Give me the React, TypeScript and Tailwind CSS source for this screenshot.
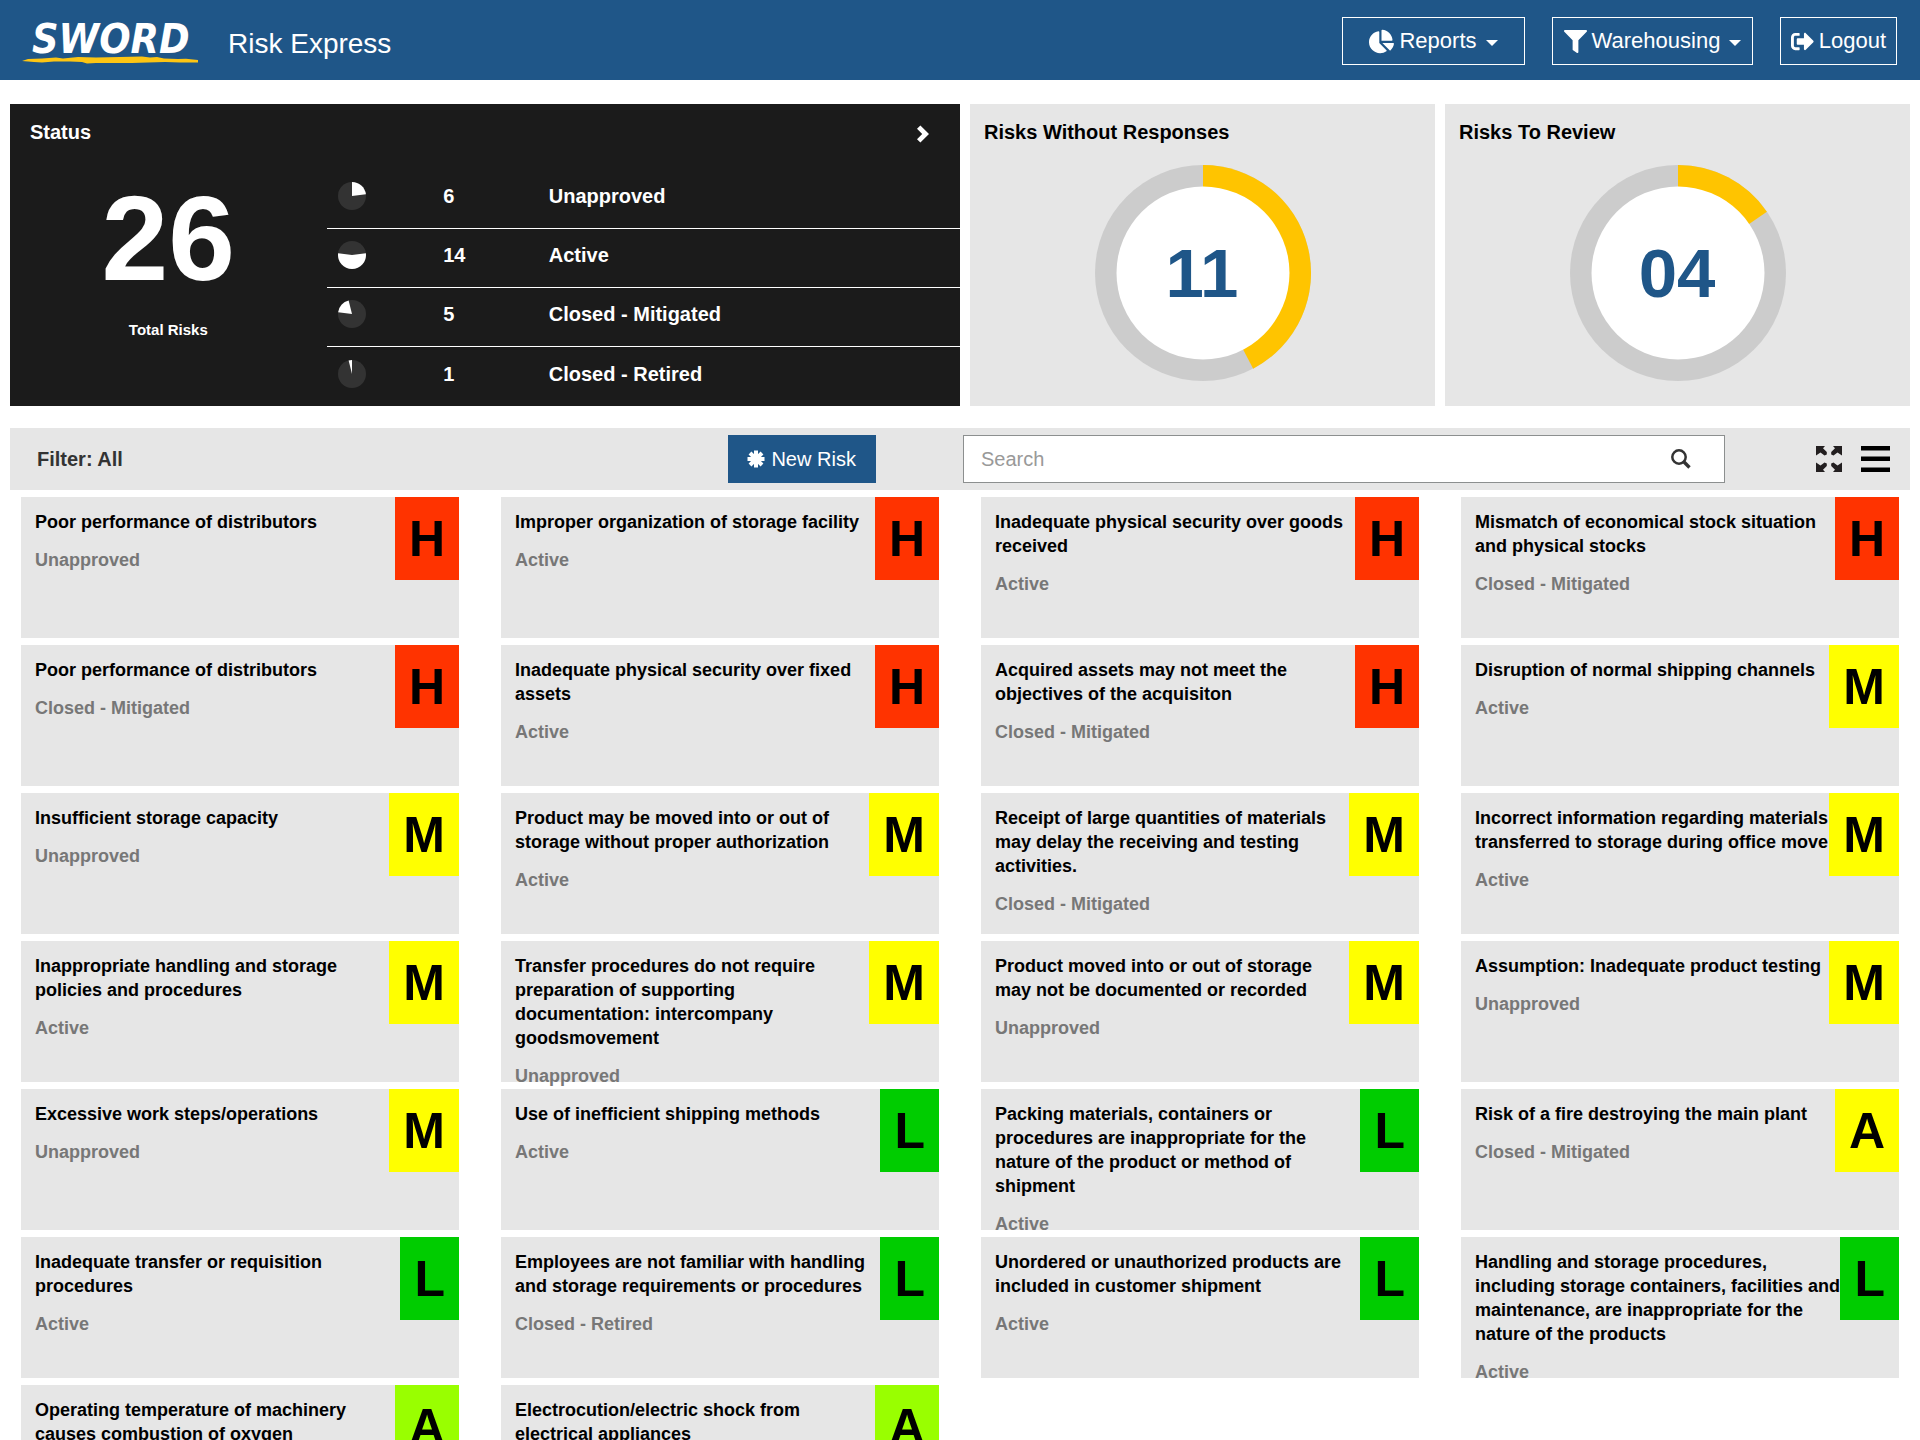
import React from "react";
import { FaChartPie, FaFilter, FaSignOutAlt } from "react-icons/fa";

type Rating = "H" | "M" | "L" | "A" | "a";

const badgeColor: Record<Rating, string> = {
  H: "bg-[#ff3300]",
  M: "bg-[#ffff00]",
  A: "bg-[#ffff00]",
  L: "bg-[#00cc00]",
  a: "bg-[#99ff00]",
};

const risks: [string, string, Rating][] = [
  ["Poor performance of distributors", "Unapproved", "H"],
  ["Improper organization of storage facility", "Active", "H"],
  ["Inadequate physical security over goods received", "Active", "H"],
  ["Mismatch of economical stock situation and physical stocks", "Closed - Mitigated", "H"],
  ["Poor performance of distributors", "Closed - Mitigated", "H"],
  ["Inadequate physical security over fixed assets", "Active", "H"],
  ["Acquired assets may not meet the objectives of the acquisiton", "Closed - Mitigated", "H"],
  ["Disruption of normal shipping channels", "Active", "M"],
  ["Insufficient storage capacity", "Unapproved", "M"],
  ["Product may be moved into or out of storage without proper authorization", "Active", "M"],
  ["Receipt of large quantities of materials may delay the receiving and testing activities.", "Closed - Mitigated", "M"],
  ["Incorrect information regarding materials transferred to storage during office move", "Active", "M"],
  ["Inappropriate handling and storage policies and procedures", "Active", "M"],
  ["Transfer procedures do not require preparation of supporting documentation: intercompany goodsmovement", "Unapproved", "M"],
  ["Product moved into or out of storage may not be documented or recorded", "Unapproved", "M"],
  ["Assumption: Inadequate product testing", "Unapproved", "M"],
  ["Excessive work steps/operations", "Unapproved", "M"],
  ["Use of inefficient shipping methods", "Active", "L"],
  ["Packing materials, containers or procedures are inappropriate for the nature of the product or method of shipment", "Active", "L"],
  ["Risk of a fire destroying the main plant", "Closed - Mitigated", "A"],
  ["Inadequate transfer or requisition procedures", "Active", "L"],
  ["Employees are not familiar with handling and storage requirements or procedures", "Closed - Retired", "L"],
  ["Unordered or unauthorized products are included in customer shipment", "Active", "L"],
  ["Handling and storage procedures, including storage containers, facilities and maintenance, are inappropriate for the nature of the products", "Active", "L"],
  ["Operating temperature of machinery causes combustion of oxygen", "Active", "a"],
  ["Electrocution/electric shock from electrical appliances", "Active", "a"],
];

const TOTAL = 26;

const statuses: { count: number; label: string; start: number }[] = [
  { count: 6, label: "Unapproved", start: 0 },
  { count: 14, label: "Active", start: 6 },
  { count: 5, label: "Closed - Mitigated", start: 20 },
  { count: 1, label: "Closed - Retired", start: 25 },
];

function wedge(c: number, r: number, from: number, to: number) {
  const point = (f: number) => {
    const a = f * 2 * Math.PI;
    return `${(c + r * Math.sin(a)).toFixed(3)} ${(c - r * Math.cos(a)).toFixed(3)}`;
  };
  return `M${c} ${c}L${point(from)}A${r} ${r} 0 ${to - from > 0.5 ? 1 : 0} 1 ${point(to)}Z`;
}

function MiniPie({ start, count }: { start: number; count: number }) {
  return (
    <svg viewBox="0 0 28 28" className="size-7" aria-hidden="true">
      <circle cx="14" cy="14" r="14" fill="#333333" />
      <path d={wedge(14, 14, start / TOTAL, (start + count) / TOTAL)} fill="#ffffff" />
    </svg>
  );
}

function Logo() {
  return (
    <svg viewBox="0 0 180 52" className="h-[52px] w-[180px] overflow-visible" role="img" aria-label="Sword">
      <text
        x="12"
        y="39"
        fill="#ffffff"
        fontFamily="'DejaVu Sans Condensed', 'DejaVu Sans', sans-serif"
        fontWeight="700"
        fontStyle="italic"
        fontSize="41"
      >
        SWORD
      </text>
      <path
        d="M2 47L8 45L22 44.500L36 43.500L43 44.500L58 43L76 43.500L100 43L122 42.500L130 43.500L137 43L144 44.500L158 45L166 44.700L178 46V48.500L160 48.500L145 48L128 48.500L112 49L90 49L76 49L67 49.500L62 48L50 47.500L34 47.500L22 48.500L14 48Z"
        fill="#fdc513"
      />
    </svg>
  );
}

function Caret() {
  return <span className="mt-1 border-x-6 border-t-6 border-x-transparent border-t-white" aria-hidden="true" />;
}

function DonutCard({ title, value, count }: { title: string; value: string; count: number }) {
  return (
    <section className="flex-1 bg-[#e6e6e6] px-[14px] pt-4">
      <h2 className="text-xl leading-6 font-bold text-black">{title}</h2>
      <div className="mt-[21px] flex justify-center">
        <svg viewBox="0 0 216 216" className="size-[216px]" role="img" aria-label={`${title}: ${value}`}>
          <circle cx="108" cy="108" r="108" fill="#cccccc" />
          <path d={wedge(108, 108, 0, count / TOTAL)} fill="#ffc400" />
          <circle cx="108" cy="108" r="86.500" fill="#ffffff" />
          <text
            x="107"
            y="132"
            textAnchor="middle"
            fill="#1f5688"
            fontFamily="'Liberation Sans', Arial, sans-serif"
            fontWeight="700"
            fontSize="69"
          >
            {value}
          </text>
        </svg>
      </div>
    </section>
  );
}

function RiskCard({ title, status, rating }: { title: string; status: string; rating: Rating }) {
  return (
    <article className="flex h-[141px] items-start bg-[#e6e6e6] pl-[14px]">
      <div className="-mr-px min-w-0 flex-1 pt-[13px] text-lg leading-6 font-bold">
        <h3 className="text-black">{title}</h3>
        <p className="mt-[14px] text-[#777777]">{status}</p>
      </div>
      <div className={`flex h-[83px] shrink-0 items-center px-[14px] text-[50px] leading-none font-bold text-black ${badgeColor[rating]}`}>
        {rating.toUpperCase()}
      </div>
    </article>
  );
}

export default function App() {
  const navButton = "flex h-12 items-center justify-center border border-white text-[22px] leading-none text-white";
  return (
    <div className="min-h-screen bg-white font-['Liberation_Sans',Arial,sans-serif] text-[#333333]">
      <header className="flex h-20 items-center bg-[#1f5688] pr-[23px] pl-5 text-white">
        <Logo />
        <h1 className="mt-2 ml-7 text-[28px] leading-8">Risk Express</h1>
        <nav className="mt-[2px] ml-auto flex gap-[27px]">
          <button type="button" className={`${navButton} w-[183px] gap-[5px]`}>
            <FaChartPie className="size-[25px]" aria-hidden="true" />
            <span className="mr-1">Reports</span>
            <Caret />
          </button>
          <button type="button" className={`${navButton} w-[201px] gap-[5px]`}>
            <FaFilter className="size-[23px]" aria-hidden="true" />
            <span className="mr-1">Warehousing</span>
            <Caret />
          </button>
          <button type="button" className={`${navButton} w-[117px] gap-[5px]`}>
            <FaSignOutAlt className="size-[23px]" aria-hidden="true" />
            Logout
          </button>
        </nav>
      </header>

      <main>
        <div className="mt-6 flex h-[302px] px-[10px]">
          <section className="flex w-1/2 bg-[#1b1b1b] text-white">
            <div className="w-1/3 pt-4 text-center font-bold">
              <h2 className="pl-5 text-left text-xl leading-6">Status</h2>
              <p className="mt-[34px] text-[120px] leading-[120px]">26</p>
              <p className="mt-5 text-[15px] leading-6">Total Risks</p>
            </div>
            <div className="flex w-2/3 flex-col">
              <div className="flex h-[66px] items-start justify-end pt-[21px] pr-[30px]">
                <button type="button" aria-label="Show status details">
                  <svg viewBox="0 0 14 18" className="h-[18px] w-[14px]" aria-hidden="true">
                    <path d="M1 3.800L4.400 0.400L13 9L4.400 17.600L1 14.200L6.200 9Z" fill="#ffffff" />
                  </svg>
                </button>
              </div>
              <ul className="text-xl leading-6 font-bold">
                {statuses.map((s) => (
                  <li key={s.label} className="grid h-[59px] grid-cols-6 items-center border-b border-white pb-[6px] last:border-b-0">
                    <span className="pl-[11px]">
                      <MiniPie start={s.start} count={s.count} />
                    </span>
                    <span className="pl-[11px]">{s.count}</span>
                    <span className="col-span-4 pl-[11px]">{s.label}</span>
                  </li>
                ))}
              </ul>
            </div>
          </section>
          <div className="flex w-1/2 gap-[10px] pl-[10px]">
            <DonutCard title="Risks Without Responses" value="11" count={11} />
            <DonutCard title="Risks To Review" value="04" count={4} />
          </div>
        </div>

        <div className="mx-[10px] mt-[22px] grid h-[62px] grid-cols-12 items-center bg-[#e6e6e6] text-xl leading-6">
          <p className="col-span-4 pl-[27px] font-bold">Filter: All</p>
          <div className="col-span-2 flex justify-center">
            <button type="button" className="flex h-12 w-[148px] items-center justify-center gap-[6px] bg-[#1f5688] text-white">
              <svg viewBox="0 0 18 18" className="size-[18px]" stroke="#ffffff" strokeWidth="4" aria-hidden="true">
                <path d="M9 0.500V17.500M0.500 9H17.500M3 3L15 15M15 3L3 15" fill="none" />
              </svg>
              New Risk
            </button>
          </div>
          <form className="relative col-span-5 pr-[27px] pl-[3px]" onSubmit={(e) => e.preventDefault()}>
            <input
              type="text"
              aria-label="Search"
              placeholder="Search"
              className="h-12 w-full border border-[#8c8f8f] bg-white pl-[17px] placeholder:text-[#999999]"
            />
            <button type="submit" aria-label="Run search" className="absolute top-[14px] right-[61px]">
              <svg viewBox="0 0 20 20" className="size-5" fill="none" stroke="#333333" aria-hidden="true">
                <circle cx="8" cy="8" r="6.700" strokeWidth="2.500" />
                <path d="M12.800 12.800L18.500 18.500" strokeWidth="3.400" />
              </svg>
            </button>
          </form>
          <div className="flex items-center justify-end gap-[19px] pr-5">
            <button type="button" aria-label="Full screen">
              <svg viewBox="0 0 26 26" className="size-[26px]" fill="#231f20" aria-hidden="true">
                <path d="M0 0H9L7 2.200L10.800 6V8.500L8.500 9.500L4.500 6.500L0 9.500Z" />
                <path d="M26 0H17L19 2.200L15.200 6V8.500L17.500 9.500L21.500 6.500L26 9.500Z" />
                <path d="M0 26H9L7 23.800L10.800 20V17.500L8.500 16.500L4.500 19.500L0 16.500Z" />
                <path d="M26 26H17L19 23.800L15.200 20V17.500L17.500 16.500L21.500 19.500L26 16.500Z" />
              </svg>
            </button>
            <button type="button" aria-label="List view">
              <svg viewBox="0 0 29 26" className="h-[26px] w-[29px]" fill="#000000" aria-hidden="true">
                <path d="M0 0H29V4.500H0ZM0 10.500H29V15H0ZM0 21.500H29V26H0Z" />
              </svg>
            </button>
          </div>
        </div>

        <div className="mt-[7px] grid grid-cols-4 gap-x-[42px] gap-y-[7px] px-[21px]">
          {risks.map(([title, status, rating], i) => (
            <RiskCard key={i} title={title} status={status} rating={rating} />
          ))}
        </div>
      </main>
    </div>
  );
}
